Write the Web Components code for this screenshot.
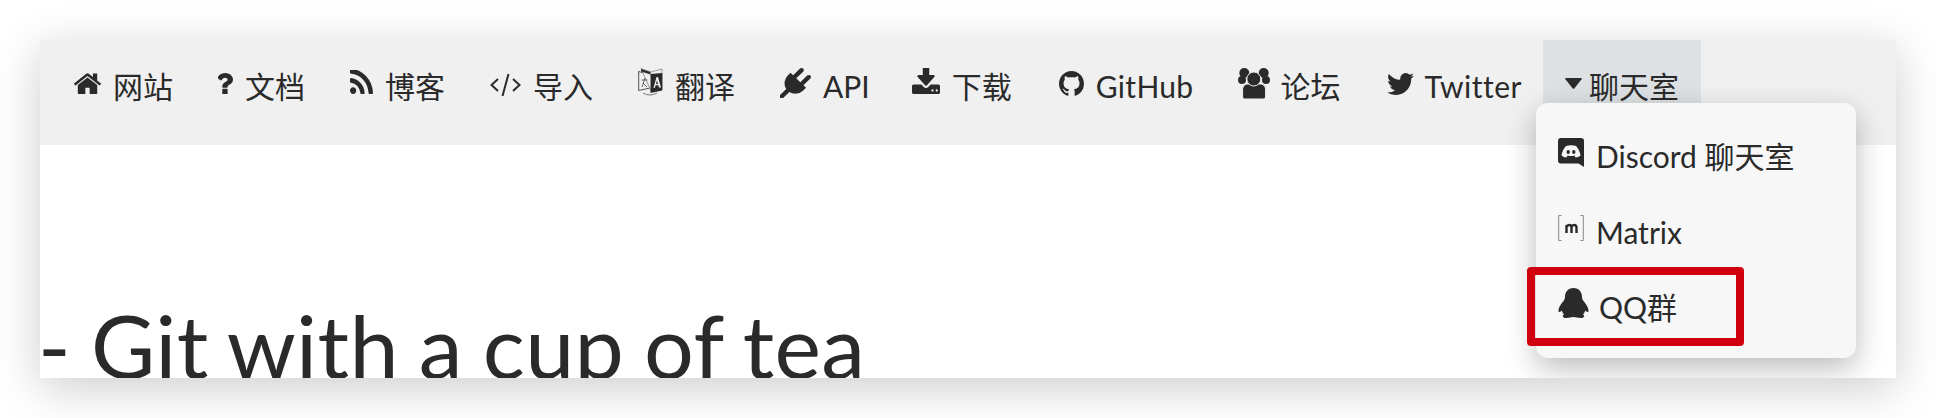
<!DOCTYPE html>
<html lang="zh">
<head>
<meta charset="utf-8">
<title>Gitea</title>
<style>
  html, body { margin: 0; background: #fff; }
  body {
    height: 418px;
    box-sizing: border-box;
    padding: 40px;
    overflow: hidden;
    font-family: Lato, "Noto Sans CJK SC", sans-serif;
    color: #2a2a2a;
  }
</style>
</head>
<body>
<app-window>
  <nav-bar>
    <nav-item><nav-icon name="home" w="27" h="21" top="9"></nav-icon>网站</nav-item>
    <nav-item><nav-icon name="question" w="15" h="21" top="9"></nav-icon>文档</nav-item>
    <nav-item><nav-icon name="rss" w="23" h="24" top="6"></nav-icon>博客</nav-item>
    <nav-item><nav-icon name="code" w="31" h="23" top="9"></nav-icon>导入</nav-item>
    <nav-item><nav-icon name="language" w="25" h="30" top="4"></nav-icon>翻译</nav-item>
    <nav-item style="padding-right:19px"><nav-icon name="plug" w="31" h="30" top="4"></nav-icon>API</nav-item>
    <nav-item style="padding-right:24px"><nav-icon name="download" w="28" h="26" top="4"></nav-icon>下载</nav-item>
    <nav-item style="letter-spacing:.3px"><nav-icon name="github" w="25" h="25" top="7"></nav-icon>GitHub</nav-item>
    <nav-item style="gap:10px;padding-right:24px"><nav-icon name="users" w="32" h="31" top="4"></nav-icon>论坛</nav-item>
    <nav-item style="gap:10px;padding-right:21px;letter-spacing:.5px"><nav-icon name="twitter" w="27" h="22" top="9"></nav-icon>Twitter</nav-item>
    <nav-item active><nav-icon name="caret" w="17" h="11" top="14" style="margin-right:-5px"></nav-icon>聊天室</nav-item>
  </nav-bar>
  <hero-title>- Git with a cup of tea</hero-title>
  <chat-menu>
    <menu-row><nav-icon name="discord" w="26" h="29" top="4" style="margin-right:1px"></nav-icon>Discord 聊天室</menu-row>
    <menu-row><nav-icon name="matrix" w="26" h="26" top="5" style="margin-right:1px"></nav-icon>Matrix</menu-row>
    <menu-row style="padding-top:15px"><nav-icon name="qq" w="31" h="30" top="3" style="margin-right:-1px"></nav-icon>QQ群</menu-row>
  </chat-menu>
  <red-mark></red-mark>
</app-window>

<script>
const ICONS = {
  home: ['96 230 1600 1310', '<path d="M1472 992v480q0 26-19 45t-45 19h-384v-384h-256v384h-384q-26 0-45-19t-19-45v-480q0-1 .5-3t.5-3l575-474 575 474q1 2 1 6zm223-69l-62 74q-8 9-21 11h-3q-13 0-21-7l-692-577-692 577q-12 8-24 7-13-2-21-11l-62-74q-8-10-7-23.500t11-21.500l719-599q32-26 76-26t76 26l244 204v-195q0-14 9-23t23-9h192q14 0 23 9t9 23v408l219 182q10 8 11 21.500t-7 23.500z"/>'],
  question: ['450 376 892 1280', '<path d="M1024 1376v240q0 16-12 28t-28 12h-240q-16 0-28-12t-12-28v-240q0-16 12-28t28-12h240q16 0 28 12t12 28zm316-600q0 54-15.500 101t-35 76.500-55 59.500-57.500 43.500-61 35.500q-41 23-68.500 65t-27.500 67q0 17-12 32.500t-28 15.500h-240q-15 0-25.500-18.500t-10.500-37.500v-45q0-83 65-156.500t143-108.500q59-27 84-56t25-76q0-42-46.500-74t-107.500-32q-65 0-108 29-35 25-107 115-13 16-31 16-12 0-25-8l-164-125q-13-10-15.500-25t5.500-28q160-266 464-266 80 0 161 31t146 83 106 127.500 41 158.500z"/>'],
  rss: ['192 192 1408 1344', '<path d="M576 1344q0 80-56 136t-136 56-136-56-56-136 56-136 136-56 136 56 56 136zm512 123q2 28-17 48-18 21-47 21h-135q-25 0-43-16.500t-20-41.500q-22-229-184.500-391.500t-391.500-184.500q-25-2-41.500-20t-16.500-43v-135q0-29 21-47 17-17 43-17h5q160 13 306 80.500t259 181.500q114 113 181.500 259t80.500 306zm512 2q2 27-18 47-18 20-46 20h-143q-26 0-44.500-17.500t-19.500-42.500q-12-215-101-408.500t-231.500-336-336-231.500-408.500-102q-25-1-42.500-19.500t-17.500-43.500v-143q0-28 20-46 18-18 44-18h3q262 13 501.500 120t425.500 294q187 186 294 425.500t120 501.500z"/>'],
  code: ['0 0 31 23', '<path d="M8 6 1.500 12 8 18M23 6l6.500 6-6.500 6M18.500 1l-6 22" fill="none" stroke="currentColor" stroke-width="2"/>'],
  language: ['0 0 25 30', '<path d="M12 7 .7 3.500v19L12 20z" fill="#f0f0f0" stroke="currentColor" stroke-width=".8"/><path d="M3 0.500 13 4l11-3v20l-11 2z" fill="#f0f0f0" stroke="#777" stroke-width=".7"/><path d="M12.500 6 24.300 5v17.500L12.500 25z M3 1 12.500 4v2.500L3 3.500z"/><path d="M15.500 20l3-11h1.500l3 10.500h-2l-.6-2.300h-2.800l-.6 2.500zm2.500-4h2l-1-3.800z" fill="#f0f0f0"/><path d="M3.500 12h6M7 10l-3 9M5 15l4 4" fill="none" stroke="#444" stroke-width=".8"/><path d="M5 25q7 4 14 0" fill="none" stroke="#666" stroke-width=".9"/>'],
  plug: ['0 0 1792 1792', '<path d="M1755 453q37 38 37 90.500t-37 90.500l-401 400 150 150-160 160q-163 163-389.500 186.500t-411.500-100.500l-362 362h-181v-181l362-362q-124-185-100.500-411.500t186.500-389.500l160-160 150 150 400-401q38-37 91-37t90 37 37 90.500-37 90.500l-400 401 234 234 401-400q38-37 91-37t90 37z"/>'],
  download: ['64 128 1664 1408', '<path d="M1344 1344q0-26-19-45t-45-19-45 19-19 45 19 45 45 19 45-19 19-45zm256 0q0-26-19-45t-45-19-45 19-19 45 19 45 45 19 45-19 19-45zm128-224v320q0 40-28 68t-68 28h-1472q-40 0-68-28t-28-68v-320q0-40 28-68t68-28h465l135 136q58 56 136 56t136-56l136-136h464q40 0 68 28t28 68zm-325-569q17 41-14 70l-448 448q-18 19-45 19t-45-19l-448-448q-31-29-14-70 17-39 59-39h256v-448q0-26 19-45t45-19h256q26 0 45 19t19 45v448h256q42 0 59 39z"/>'],
  github: ['0 0 16 15.700', '<path d="M8 0C3.580 0 0 3.580 0 8c0 3.540 2.290 6.530 5.470 7.590.4.070.55-.17.55-.38 0-.19-.01-.82-.01-1.490-2.010.37-2.530-.49-2.690-.94-.09-.23-.48-.94-.82-1.130-.28-.15-.68-.52-.01-.53.63-.01 1.080.58 1.230.82.72 1.210 1.870.87 2.330.66.07-.52.28-.87.51-1.070-1.780-.2-3.640-.89-3.640-3.950 0-.87.31-1.590.82-2.150-.08-.2-.36-1.020.08-2.120 0 0 .67-.21 2.200.82.64-.18 1.320-.27 2-.27.68 0 1.360.09 2 .27 1.530-1.040 2.200-.82 2.200-.82.44 1.100.16 1.920.08 2.120.51.56.82 1.270.82 2.150 0 3.070-1.870 3.750-3.650 3.950.29.25.54.73.54 1.480 0 1.070-.01 1.930-.01 2.200 0 .21.15.46.55.38A8.013 8.013 0 0016 8c0-4.420-3.580-8-8-8z"/>'],
  users: ['0 0 32 31', '<circle cx="4" cy="12" r="4"/><circle cx="28" cy="12" r="4"/><circle cx="6.300" cy="5" r="5"/><circle cx="25.700" cy="5" r="5"/><path d="M4.600 29V21q0-4 4-5h15q4 1 4 5v8q0 2-2 2h-19q-2 0-2-2z" stroke="#f0f0f0" stroke-width="1"/><circle cx="15.800" cy="11" r="7" stroke="#f0f0f0" stroke-width="1"/>'],
  twitter: ['108 250 1576 1290', '<path d="M1684 408q-67 98-162 167 1 14 1 42 0 130-38 259.500t-115.500 248.500-184.500 210.500-258 146-323 54.500q-271 0-496-145 35 4 78 4 225 0 401-138-105-2-188-64.500t-114-159.500q33 5 61 5 43 0 85-11-112-23-185.500-111.500t-73.500-205.500v-4q68 38 146 41-66-44-105-115t-39-154q0-88 44-163 121 149 294.500 238.500t371.500 99.500q-8-38-8-74 0-134 94.500-228.500t228.500-94.500q140 0 236 102 109-21 205-78-37 115-142 181 92-10 184-50z"/>'],
  caret: ['0 0 17 11', '<path d="M1 0h15q1.500 0 .6 1.200L9.300 10.400q-.8.900-1.600 0L.4 1.200Q-.5 0 1 0z"/>'],
  discord: ['0 0 26 29', '<path d="M3 0h20a3 3 0 0 1 3 3v26l-5.500-3.500H3a3 3 0 0 1-3-3V3a3 3 0 0 1 3-3z"/><path d="M8 8q5-1.500 10 0 3.500 3.500 4.500 9.500-2 2-5 2l-1-2q-3.500 1-7 0l-1 2q-3 0-5-2 1-6 4.500-9.500z" fill="#f7f7f7"/><ellipse cx="10.200" cy="14" rx="1.700" ry="1.900"/><ellipse cx="15.800" cy="14" rx="1.700" ry="1.900"/>'],
  matrix: ['0 0 26 26', '<path d="M3.500 .5H.7v25h2.800M22.500 .5h2.800v25h-2.800" fill="none" stroke="#888" stroke-width="1"/><path d="M8.500 18V10M8.500 12q.8-2 2.700-2t2.300 2v6M13.500 12q.8-2 2.700-2t2.300 2v6" fill="none" stroke="currentColor" stroke-width="2.400"/>'],
  qq: ['0 0 31 30', '<path d="M15.500 0C10 0 7 4 7 9c0 1.500-.5 2.500-1.500 4C3.500 15.500.5 19 .5 23c0 1.500 1.200 1.500 3.200-.5.5 1.500 1.300 3 2.500 4-2 .7-2.200 3.500 2 3.500 3 0 5-1 7.300-1s4.300 1 7.300 1c4.200 0 4-2.800 2-3.500 1.200-1 2-2.500 2.500-4 2 2 3.200 2 3.200.5 0-4-3-7.500-5-10-1-1.500-1.500-2.500-1.500-4 0-5-3-9-8.500-9z"/>']
};

class AppWindow extends HTMLElement {
  constructor() {
    super();
    this.attachShadow({ mode: 'open' });
    this.shadowRoot.innerHTML = `
      <style>
        :host {
          display: block;
          height: 338px;
          background: #fff;
          box-shadow: 0 10px 44px rgba(0, 0, 0, .2);
        }
        .clip { height: 100%; overflow: hidden; position: relative; }
      </style>
      <div class="clip"><slot></slot></div>`;
  }
}

class NavBar extends HTMLElement {
  constructor() {
    super();
    this.attachShadow({ mode: 'open' });
    this.shadowRoot.innerHTML = `
      <style>
        :host {
          display: flex;
          height: 105px;
          padding-left: 11px;
          background: #f0f0f0;
        }
      </style>
      <slot></slot>`;
  }
}

class NavItem extends HTMLElement {
  constructor() {
    super();
    this.attachShadow({ mode: 'open' });
    this.shadowRoot.innerHTML = `
      <style>
        :host {
          display: flex;
          align-items: flex-start;
          gap: 12px;
          padding: 24px 22px 0 23px;
          font-size: 30px;
          line-height: 44px;
          white-space: nowrap;
        }
        :host([active]) { background: #dde1e4; padding-left: 22px; }
      </style>
      <slot></slot>`;
  }
}

class NavIcon extends HTMLElement {
  constructor() {
    super();
    this.attachShadow({ mode: 'open' });
  }

  connectedCallback() {
    const icon = ICONS[this.getAttribute('name')];
    const w = this.getAttribute('w');
    const h = this.getAttribute('h');
    const top = this.getAttribute('top');
    this.shadowRoot.innerHTML = `
      <style>
        :host { display: block; flex: none; width: ${w}px; height: ${h}px; margin-top: ${top}px; }
        svg { display: block; width: 100%; height: 100%; fill: currentColor; }
      </style>
      <svg viewBox="${icon[0]}" preserveAspectRatio="none">${icon[1]}</svg>`;
  }
}

class HeroTitle extends HTMLElement {
  constructor() {
    super();
    this.attachShadow({ mode: 'open' });
    this.shadowRoot.innerHTML = `
      <style>
        :host {
          display: block;
          margin-left: -2px;
          padding-top: 152px;
          font-size: 88px;
          letter-spacing: .35px;
          word-spacing: -3px;
          font-weight: 400;
          line-height: 96px;
          white-space: nowrap;
        }
      </style>
      <slot></slot>`;
  }
}

class ChatMenu extends HTMLElement {
  constructor() {
    super();
    this.attachShadow({ mode: 'open' });
    this.shadowRoot.innerHTML = `
      <style>
        :host {
          position: absolute;
          left: 1496px;
          top: 63px;
          width: 320px;
          height: 255px;
          box-sizing: border-box;
          padding-top: 15px;
          background: #f7f7f7;
          border-radius: 12px;
          box-shadow: 0 10px 30px rgba(0, 0, 0, .27);
        }
      </style>
      <slot></slot>`;
  }
}

class MenuRow extends HTMLElement {
  constructor() {
    super();
    this.attachShadow({ mode: 'open' });
    this.shadowRoot.innerHTML = `
      <style>
        :host {
          display: flex;
          align-items: flex-start;
          gap: 11px;
          height: 76px;
          box-sizing: border-box;
          padding: 16px 22px 0;
          font-size: 30px;
          line-height: 44px;
          white-space: nowrap;
        }
      </style>
      <slot></slot>`;
  }
}

class RedMark extends HTMLElement {
  constructor() {
    super();
    this.attachShadow({ mode: 'open' });
    this.shadowRoot.innerHTML = `
      <style>
        :host {
          position: absolute;
          left: 1487px;
          top: 227px;
          width: 217px;
          height: 79px;
          box-sizing: border-box;
          border: 8px solid #d0000f;
          border-radius: 4px;
        }
      </style>`;
  }
}

customElements.define('app-window', AppWindow);
customElements.define('nav-bar', NavBar);
customElements.define('nav-item', NavItem);
customElements.define('nav-icon', NavIcon);
customElements.define('hero-title', HeroTitle);
customElements.define('chat-menu', ChatMenu);
customElements.define('menu-row', MenuRow);
customElements.define('red-mark', RedMark);
</script>
</body>
</html>
